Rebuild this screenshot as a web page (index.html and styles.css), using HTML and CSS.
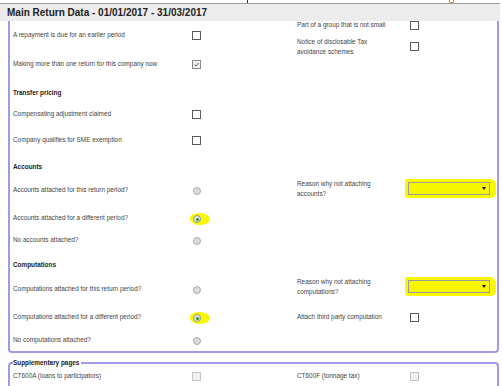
FILE: index.html
```html
<!DOCTYPE html>
<html>
<head>
    <title>Main Return Data</title>
    <link rel="stylesheet" href="styles.css">
</head>
<body>
    <div class="topstrip">
        <span class="mark mark-line"></span>
        <span class="mark mark-hook"></span>
    </div>
    <div class="header">
        <h1>Main Return Data - 01/01/2017 - 31/03/2017</h1>
    </div>

    <div class="panel">
        <div class="col-left">
            <div class="row"><span class="label">A repayment is due for an earlier period</span><span class="check"></span></div>
            <div class="row"><span class="label">Making more than one return for this company now</span><span class="check checked"><svg viewBox="0 0 9 9"><path d="M2 4.6 L3.8 6.4 L7 2.6" /></svg></span></div>

            <div class="row title">Transfer pricing</div>
            <div class="row"><span class="label">Compensating adjustment claimed</span><span class="check"></span></div>
            <div class="row"><span class="label">Company qualifies for SME exemption</span><span class="check"></span></div>

            <div class="row title">Accounts</div>
            <div class="row"><span class="label">Accounts attached for this return period?</span><span class="radio"></span></div>
            <div class="row"><span class="label">Accounts attached for a different period?</span><span class="radio selected"></span></div>
            <div class="row"><span class="label">No accounts attached?</span><span class="radio"></span></div>

            <div class="row title">Computations</div>
            <div class="row"><span class="label">Computations attached for this return period?</span><span class="radio"></span></div>
            <div class="row"><span class="label">Computations attached for a different period?</span><span class="radio selected"></span></div>
            <div class="row"><span class="label">No computations attached?</span><span class="radio"></span></div>
        </div>

        <div class="col-right">
            <div class="ritem group-item"><span class="rlabel">Part of a group that is not small</span><span class="check"></span></div>
            <div class="ritem notice-item"><span class="rlabel">Notice of disclosable Tax avoidance schemes</span><span class="check"></span></div>
            <div class="ritem racc-item"><span class="rlabel">Reason why not attaching accounts?</span><span class="select"><span class="arrow"></span></span></div>
            <div class="ritem rcomp-item"><span class="rlabel">Reason why not attaching computations?</span><span class="select"><span class="arrow"></span></span></div>
            <div class="ritem attach-item"><span class="rlabel">Attach third party computation</span><span class="check"></span></div>
        </div>
    </div>

    <fieldset class="supplementary">
        <legend>Supplementary pages</legend>
        <div class="supp-row">
            <span class="label">CT600A (loans to participators)</span><span class="check disabled"></span>
            <span class="supp-right">CT600F (tonnage tax)</span><span class="check disabled"></span>
        </div>
    </fieldset>
</body>
</html>
```

FILE: styles.css
```css
body {
    margin: 0;
    font-family: "Liberation Sans", Arial, sans-serif;
    font-size: 6.4px;
    color: #444;
    background-color: white;
    overflow: hidden;
}

.topstrip {
    height: 3px;
    display: flex;
}

.mark {
    display: block;
    height: 3px;
}

.mark-line {
    width: 1px;
    margin-left: 247px;
    background-color: #333;
}

.mark-hook {
    width: 3px;
    height: 2px;
    margin-left: 201px;
    border: 1px solid #d87a1c;
    border-top: none;
    border-radius: 0 0 2px 2px;
}

.header {
    height: 17px;
    margin-right: 2px;
    border-top: 1px solid #9d9d9d;
    background-color: #ececec;
    padding-left: 7px;
}

.header h1 {
    margin: 0;
    font-size: 10px;
    line-height: 17px;
    font-weight: bold;
    color: #222;
}

.panel {
    display: flex;
    margin: 0 3px 0 8px;
    height: 330px;
    border: 2px solid #9c9ce4;
    border-top: none;
    border-radius: 0 0 4px 4px;
}

.col-left {
    width: 284px;
    padding: 7px 0 0 3px;
    display: grid;
    grid-template-rows: 29px 29px 21px 26px 27px 23px 28px 22px 25px 24px 28px 23px 18px;
}

.row {
    display: flex;
    align-items: flex-start;
    line-height: 14px;
}

.row.title {
    font-weight: bold;
    color: #222;
}

.label {
    width: 179px;
    flex-shrink: 0;
}

.check {
    width: 7px;
    height: 7px;
    margin-top: 3px;
    border: 1px solid #5a5a5a;
    background-color: white;
    flex-shrink: 0;
}

.check.checked {
    border-color: #8a8a8a;
    background-color: #f0f0f0;
}

.check svg {
    display: block;
    width: 7px;
    height: 7px;
}

.check path {
    fill: none;
    stroke: #444;
    stroke-width: 1.1;
}

.check.disabled {
    border-color: #c4c4c4;
    background-color: #f1f1f1;
}

.radio {
    position: relative;
    width: 6px;
    height: 6px;
    margin: 4px 0 0 1px;
    border: 1px solid #aaa;
    border-radius: 50%;
    background-color: #dcdcdc;
    flex-shrink: 0;
}

.radio.selected {
    border-color: #8e9a8e;
    background-color: #e4e4e4;
}

.radio.selected::before {
    content: "";
    position: absolute;
    top: -3px;
    bottom: -3px;
    left: -4px;
    right: -10px;
    background-color: #f8f800;
    border-radius: 45% 55% 50% 50%;
    z-index: -1;
}

.radio.selected::after {
    content: "";
    position: absolute;
    top: 1.5px;
    left: 1.5px;
    width: 3px;
    height: 3px;
    border-radius: 50%;
    background-color: #2e8b2e;
}

.col-right {
    flex: 1;
    display: grid;
    grid-template-rows: 8px 8px 19px 123px 19px 79px 19px 16px 10px;
    grid-template-areas: "group" "." "notice" "." "racc" "." "rcomp" "." "attach";
}

.group-item { grid-area: group; }
.notice-item { grid-area: notice; }
.racc-item { grid-area: racc; }
.rcomp-item { grid-area: rcomp; }
.attach-item { grid-area: attach; }

.ritem {
    display: flex;
    align-items: center;
    line-height: 9.5px;
}

.ritem .check {
    margin-top: 0;
}

.rlabel {
    width: 113px;
    padding-right: 15px;
    box-sizing: border-box;
    flex-shrink: 0;
}

.select {
    position: relative;
    width: 80px;
    height: 11px;
    margin-left: -2px;
    border: 1px solid #9a9a9a;
    background-color: #f6f600;
    display: flex;
    justify-content: flex-end;
    align-items: center;
}

.select::before {
    content: "";
    position: absolute;
    top: -4px;
    bottom: -4px;
    left: -4px;
    right: -7px;
    background-color: #f8f800;
    border-radius: 2px 6px 5px 3px / 3px 6px 5px 4px;
    z-index: -1;
}

.arrow {
    width: 0;
    height: 0;
    margin-right: 3px;
    border-left: 2px solid transparent;
    border-right: 2px solid transparent;
    border-top: 3px solid #111;
}

.supplementary {
    margin: 5px 3px 0 8px;
    padding: 2px 0 0 3px;
    border: 2px solid #9c9ce4;
    border-bottom: none;
    border-radius: 4px 4px 0 0;
    height: 40px;
}

.supplementary legend {
    padding: 0 2px 0 0;
    font-weight: bold;
    color: #222;
    line-height: 9px;
}

.supp-row {
    display: flex;
    align-items: flex-start;
    line-height: 14px;
}

.supp-right {
    width: 113px;
    margin-left: 96px;
    flex-shrink: 0;
}
```
